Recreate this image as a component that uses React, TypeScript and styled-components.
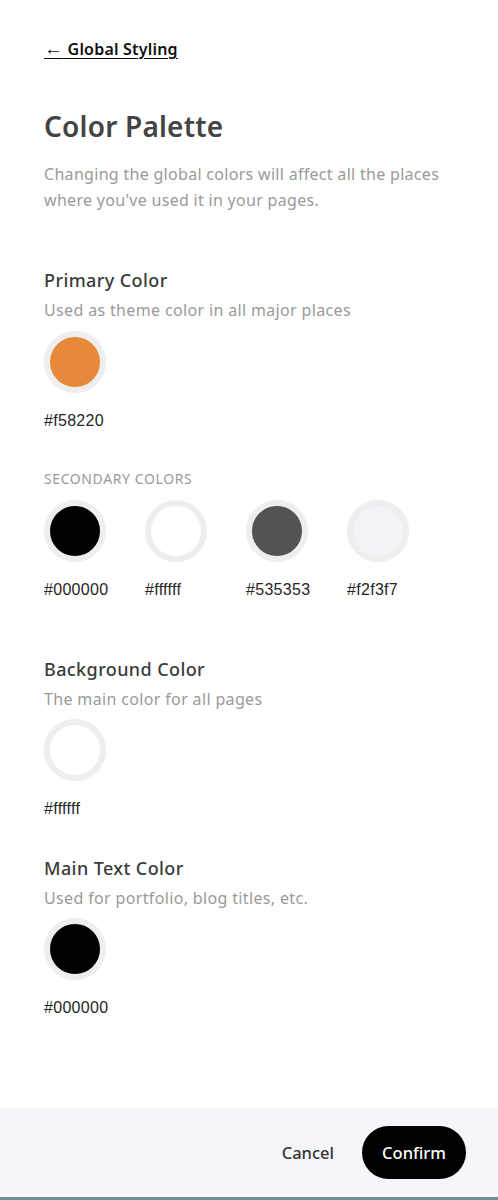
import styled, { createGlobalStyle } from 'styled-components';

const GlobalStyle = createGlobalStyle`
  * { box-sizing: border-box; }
  body {
    margin: 0;
    background: #ffffff;
    font-family: 'Noto Sans', 'Open Sans', sans-serif;
    color: #3b3b3b;
  }
`;

const Page = styled.div`
  min-height: 100vh;
  display: flex;
  flex-direction: column;
`;

const Content = styled.main`
  padding: 38px 44px 0;
`;

const BackLink = styled.a`
  display: inline-block;
  font-size: 16px;
  line-height: 20px;
  font-weight: 600;
  letter-spacing: 0.2px;
  color: #111;
  text-decoration: underline;
  text-underline-offset: 3px;
  cursor: pointer;
`;

const Arrow = styled.span`
  font-size: 19px;
  line-height: 0;
  font-weight: 400;
`;

const Title = styled.h1`
  margin: 50px 0 0;
  font-size: 28px;
  line-height: 32px;
  font-weight: 600;
  letter-spacing: 0.2px;
  color: #444;
`;

const Description = styled.p`
  margin: 19px 0 0;
  font-size: 16px;
  line-height: 26px;
  letter-spacing: 0.3px;
  color: #9a9a9a;
`;

const Section = styled.section<{ $gap: number }>`
  margin-top: ${(p) => p.$gap}px;
`;

const Heading = styled.h2`
  margin: 0;
  font-size: 18px;
  line-height: 24px;
  font-weight: 500;
  letter-spacing: 0.4px;
  color: #3b3b3b;
`;

const Sub = styled.p`
  margin: 7px 0 0;
  font-size: 16px;
  line-height: 22px;
  letter-spacing: 0.35px;
  color: #9a9a9a;
`;

const Label = styled.div`
  margin-top: 39px;
  font-size: 14px;
  line-height: 18px;
  color: #9a9a9a;
  text-transform: uppercase;
  letter-spacing: 0.6px;
`;

const SwatchGrid = styled.div`
  display: grid;
  grid-template-columns: repeat(4, 101px);
  margin-top: 12px;
`;

const Swatch = styled.div<{ $top?: number }>`
  display: flex;
  flex-direction: column;
  align-items: flex-start;
  margin-top: ${(p) => p.$top ?? 0}px;
`;

const Circle = styled.div<{ $color: string }>`
  width: 62px;
  height: 62px;
  border-radius: 50%;
  border: 6px solid #eeeeee;
  background: ${(p) => p.$color};
`;

const Hex = styled.div`
  margin-top: 18px;
  font-family: 'Liberation Sans', Arial, sans-serif;
  font-size: 16px;
  line-height: 20px;
  letter-spacing: 0.3px;
  color: #262626;
`;

const Footer = styled.footer`
  margin-top: auto;
  height: 92px;
  background: #f5f6fa;
  border-bottom: 3px solid #6c8f99;
  display: flex;
  align-items: center;
  justify-content: flex-end;
  gap: 28px;
  padding: 0 32px 0 0;
`;

const CancelButton = styled.button`
  border: none;
  background: none;
  padding: 0;
  font-family: inherit;
  font-size: 16.5px;
  font-weight: 500;
  color: #333;
  cursor: pointer;
`;

const ConfirmButton = styled.button`
  width: 104px;
  height: 53px;
  border: none;
  border-radius: 27px;
  background: #000;
  color: #fff;
  font-family: inherit;
  font-size: 16.5px;
  font-weight: 500;
  cursor: pointer;
`;

const secondary = ['#000000', '#ffffff', '#535353', '#f2f3f7'];

const App = () => {
  return (
    <Page>
      <GlobalStyle />
      <Content>
        <BackLink>
          <Arrow>←</Arrow> Global Styling
        </BackLink>
        <Title>Color Palette</Title>
        <Description>
          Changing the global colors will affect all the places where you've used it in your pages.
        </Description>

        <Section $gap={55}>
          <Heading>Primary Color</Heading>
          <Sub>Used as theme color in all major places</Sub>
          <Swatch $top={10}>
            <Circle $color="#e6893b" />
            <Hex>#f58220</Hex>
          </Swatch>
          <Label>Secondary Colors</Label>
          <SwatchGrid>
            {secondary.map((c) => (
              <Swatch key={c}>
                <Circle $color={c} />
                <Hex>{c}</Hex>
              </Swatch>
            ))}
          </SwatchGrid>
        </Section>

        <Section $gap={57}>
          <Heading>Background Color</Heading>
          <Sub>The main color for all pages</Sub>
          <Swatch $top={9}>
            <Circle $color="#ffffff" />
            <Hex>#ffffff</Hex>
          </Swatch>
        </Section>

        <Section $gap={37}>
          <Heading>Main Text Color</Heading>
          <Sub>Used for portfolio, blog titles, etc.</Sub>
          <Swatch $top={9}>
            <Circle $color="#000000" />
            <Hex>#000000</Hex>
          </Swatch>
        </Section>
      </Content>

      <Footer>
        <CancelButton>Cancel</CancelButton>
        <ConfirmButton>Confirm</ConfirmButton>
      </Footer>
    </Page>
  );
};

export default App;
